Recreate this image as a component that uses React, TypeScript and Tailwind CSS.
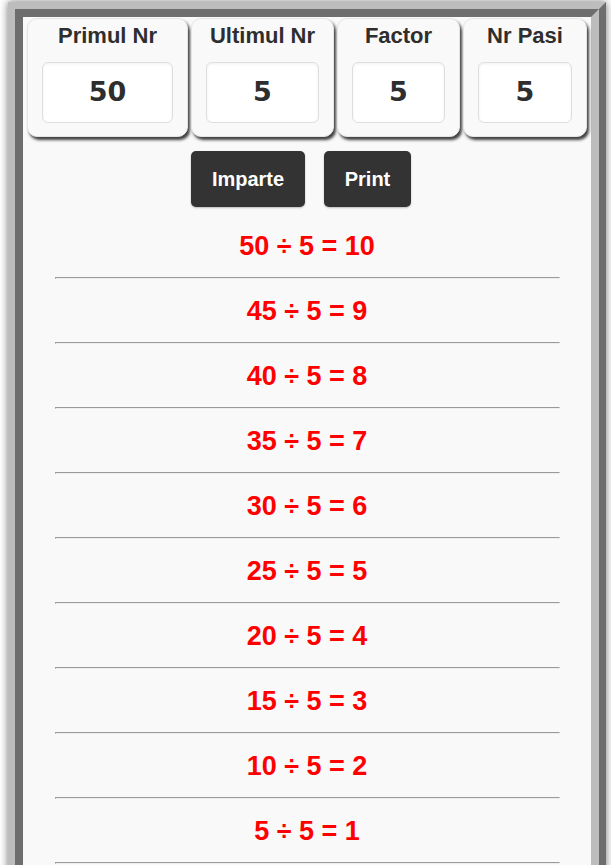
import React from "react";

const cards = [
  { label: "Primul Nr", value: "50", w: "w-[161px]" },
  { label: "Ultimul Nr", value: "5", w: "w-[143px]" },
  { label: "Factor", value: "5", w: "w-[123px]" },
  { label: "Nr Pasi", value: "5", w: "w-[124px]" },
];

const rows = [50, 45, 40, 35, 30, 25, 20, 15, 10, 5];

export default function App() {
  return (
    <div className="min-h-screen bg-white pt-[2px] pl-[8px] pb-[10px]" style={{ fontFamily: '"Liberation Sans", Arial, sans-serif' }}>
      <div className="w-[598px] border-[7px] border-t-[#bdbdbd] border-l-[#bdbdbd] border-r-[#6e6e6e] border-b-[#6e6e6e] shadow-[0_0_8px_rgba(0,0,0,0.55)]">
        <div className="border-[8px] border-t-[#6e6e6e] border-l-[#6e6e6e] border-r-[#bdbdbd] border-b-[#bdbdbd] bg-[#f9f9f9] pt-[1px] pb-[20px]">
          <div className="flex gap-[3px] px-[4px]">
            {cards.map((c) => (
              <div
                key={c.label}
                className={`${c.w} shrink-0 rounded-[10px] border border-[#e4e4e4] bg-[#f9f9f9] px-[14px] pt-[4px] pb-[13px] shadow-[2px_3px_3px_rgba(0,0,0,0.75)]`}
              >
                <div className="text-center text-[22px] font-bold leading-[26px] text-[#2e2e2e]">{c.label}</div>
                <div
                  className="mt-[13px] flex h-[61px] items-center justify-center rounded-[6px] border border-[#dedede] bg-white text-[27px] font-bold text-[#2e2e2e] shadow-[inset_0_1px_3px_rgba(0,0,0,0.06)]"
                  style={{ fontFamily: '"DejaVu Sans", Verdana, sans-serif' }}
                >
                  {c.value}
                </div>
              </div>
            ))}
          </div>

          <div className="mt-[14px] flex justify-center gap-[19px] pr-[12px]">
            <button className="flex h-[56px] w-[114px] items-center justify-center rounded-[5px] bg-[#333] text-[20px] font-bold text-white shadow-[0_1px_2px_rgba(0,0,0,0.25)]">
              Imparte
            </button>
            <button className="flex h-[56px] w-[87px] items-center justify-center rounded-[5px] bg-[#333] text-[20px] font-bold text-white shadow-[0_1px_2px_rgba(0,0,0,0.25)]">
              Print
            </button>
          </div>

          <div className="mt-[24px]">
            {rows.map((n) => (
              <div key={n}>
                <div className="text-center text-[27px] font-bold leading-[30px] text-[#ff0000]">
                  {n} ÷ 5 = {n / 5}
                </div>
                <div className="mx-auto mt-[16px] mb-[17px] h-[2px] w-[505px] border-t border-l border-t-[#9a9a9a] border-l-[#9a9a9a] border-b border-r border-b-[#eeeeee] border-r-[#eeeeee]" />
              </div>
            ))}
          </div>
        </div>
      </div>
    </div>
  );
}
